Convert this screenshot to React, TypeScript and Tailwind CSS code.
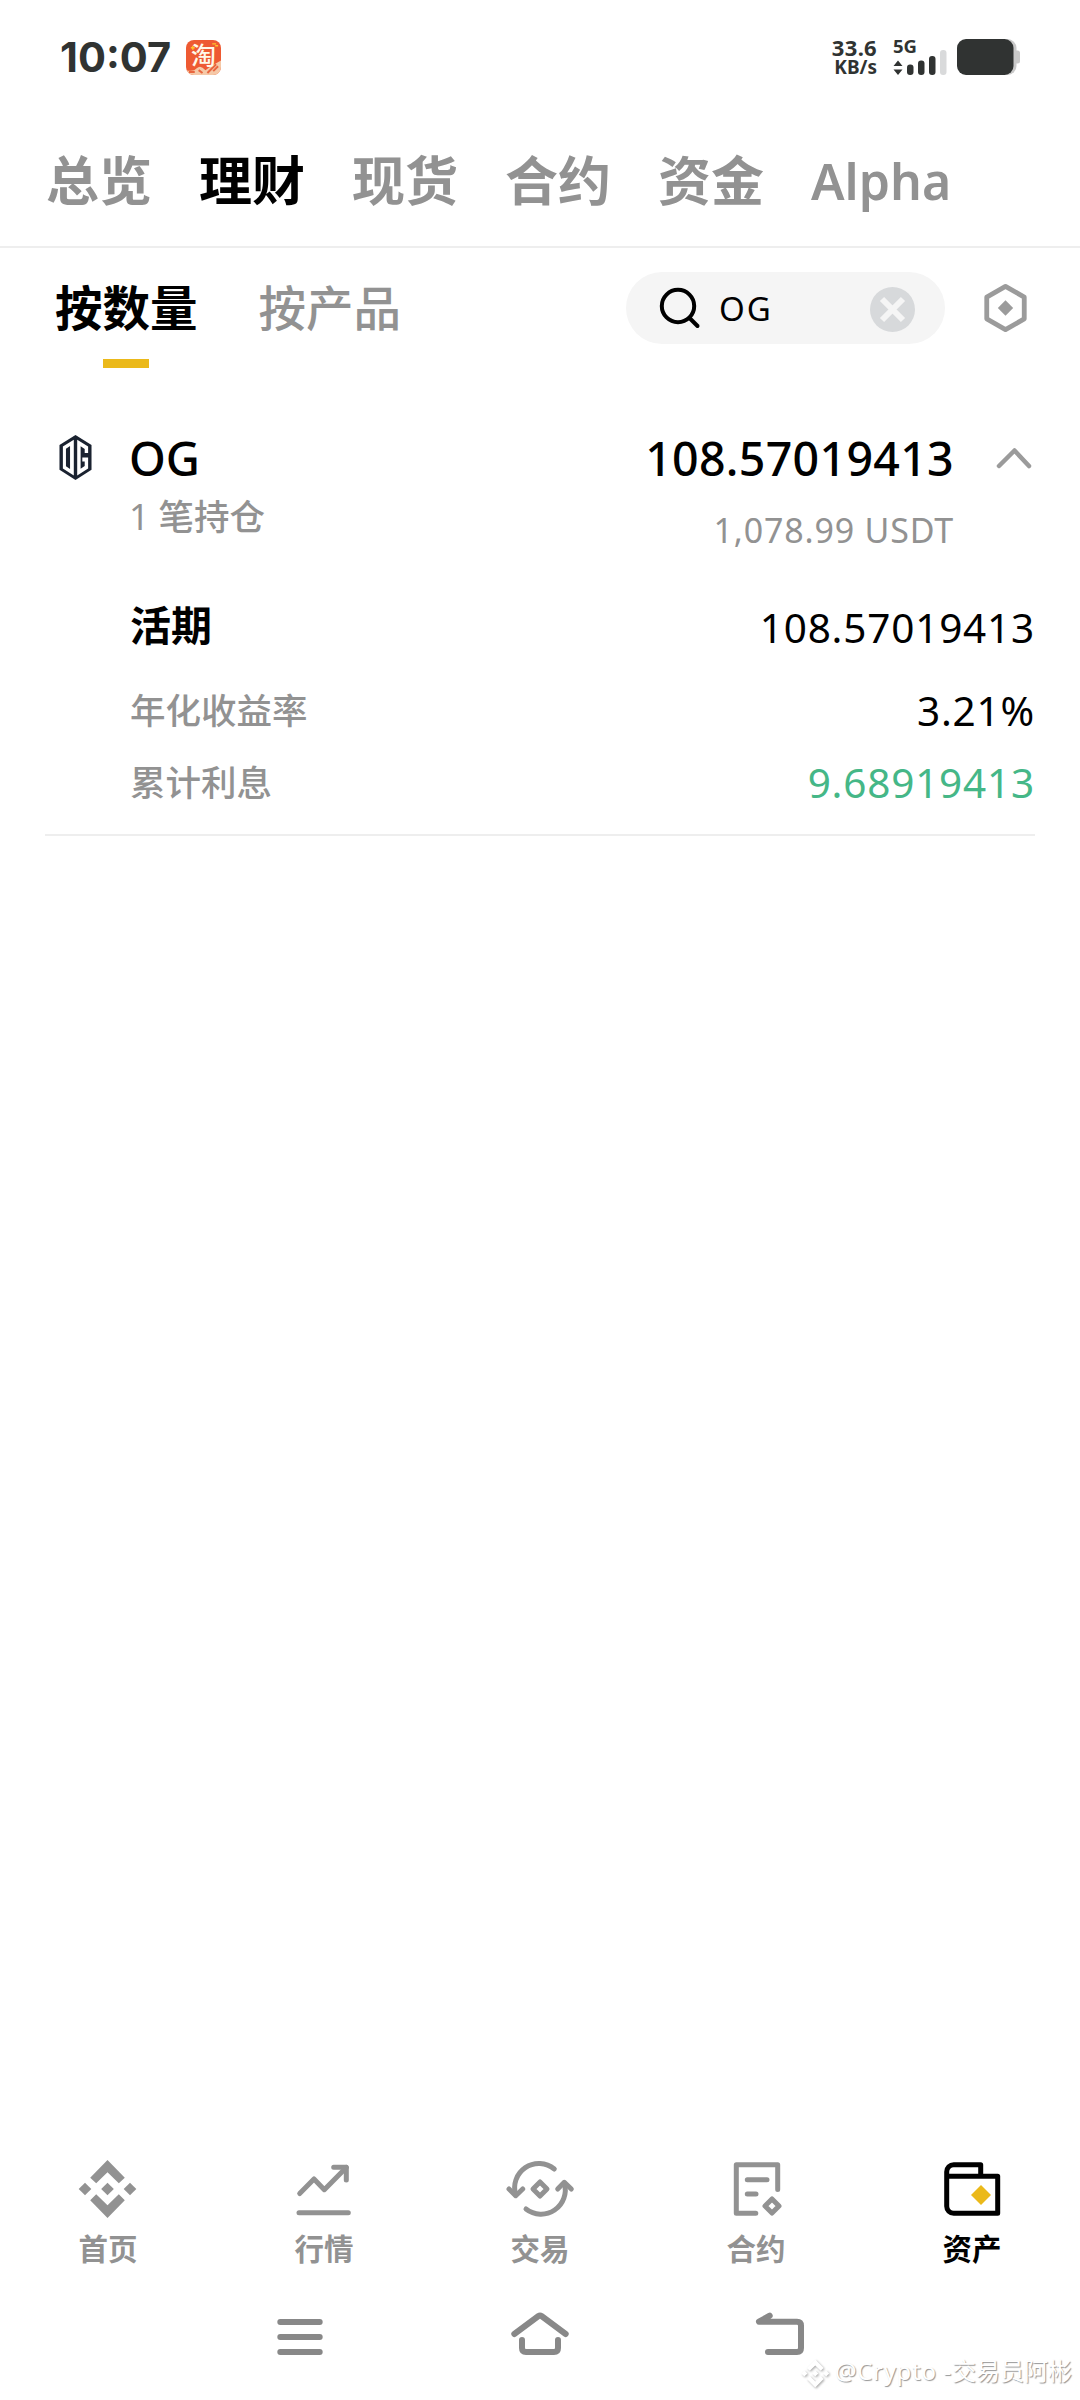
import type { ReactNode } from 'react';

type NavItem = {
  label: string;
  icon: ReactNode;
  active?: boolean;
};

const TABS = ['总览', '理财', '现货', '合约', '资金'];

const DETAILS = [
  { label: '年化收益率', value: '3.21%', tone: 'text-black' },
  { label: '累计利息', value: '9.68919413', tone: 'text-[#45b787]' },
];

function NavIcon({ children }: { children: ReactNode }) {
  return (
    <svg
      width="60"
      height="60"
      viewBox="0 0 60 60"
      fill="none"
      stroke="currentColor"
      strokeWidth="5"
      strokeLinecap="round"
      strokeLinejoin="round"
      className="overflow-visible"
    >
      {children}
    </svg>
  );
}

function BinanceMark() {
  return (
    <g fill="currentColor" stroke="none">
      <path d="M29.5 1 46.8 18.7 40.8 24.3 29.5 13.3 18.2 24.3 12.2 18.7Z" />
      <path d="M29.5 59 46.8 41.3 40.8 35.3 29.5 46.3 18.2 35.3 12.2 41.3Z" />
      <path d="M29.5 23.7 35.8 30 29.5 36.3 23.2 30Z" />
      <path d="M7 23.7 13.3 30 7 36.3.7 30Z" />
      <path d="M52 23.7 58.3 30 52 36.3 45.7 30Z" />
    </g>
  );
}

const NAV: NavItem[] = [
  { label: '首页', icon: <BinanceMark /> },
  {
    label: '行情',
    icon: (
      <>
        <path d="M5.7 34.5 20 20 30.3 30.7 52.3 8.5" />
        <path d="M39.7 8.3H52.3V21" />
        <path d="M5 53.7H54.3" />
      </>
    ),
  },
  {
    label: '交易',
    icon: (
      <>
        <path d="M44.3 10A24.3 24.3 0 0 0 5.7 36" />
        <path d="M-1 30 5.7 36.7 12.7 30" />
        <path d="M16 50A24.3 24.3 0 0 0 54.3 24" />
        <path d="M47.7 30 54.3 23.3 61.3 30" />
        <path d="M30 23 37 30 30 37 23 30Z" />
      </>
    ),
  },
  {
    label: '合约',
    icon: (
      <>
        <path d="M51.7 30.5V5.7H10.3V54.3H29.8" />
        <path d="M21.3 20.7H41M21.3 35H30" />
        <path d="M46 40 53 47 46 54 39 47Z" />
      </>
    ),
  },
  {
    label: '资产',
    active: true,
    icon: (
      <>
        <path d="M38.7 17V5.7H11.7A7 7 0 0 0 4.7 12.7V47.3A7 7 0 0 0 11.7 54.3H55.7V17.3H4.7" />
        <path d="M39 26 49 36 39 46 29 36Z" fill="#ebb91a" stroke="none" />
      </>
    ),
  },
];

function StatusBar() {
  return (
    <div className="flex h-[114px] items-center justify-between pr-[59px] pl-[60px] text-[#303332]">
      <div className="flex items-center">
        <span className="w-[126px] font-['Inter','Noto_Sans',sans-serif] text-[41.5px] leading-[42px] font-bold">10:07</span>
        <div className="relative flex h-[35px] w-[35px] justify-center rounded-lg bg-[#ee5a32]">
          <svg className="absolute inset-0 rounded-lg" width="35" height="35" viewBox="0 0 36 36">
            <path d="M0 31Q8 33 11 29Q15 25 20 31Q25 27 36 21V36H0Z" fill="#f5c9a8" />
            <path d="M3 33h6M13 31l4 3M22 34l9-9M28 32l5-5" stroke="#e9663f" strokeWidth="2" />
            <path d="M7 6v4M5 8h4M27 4h4M30 6h3" stroke="#ffc32b" strokeWidth="1.5" />
          </svg>
          <span className="relative font-['Noto_Sans_CJK_SC',sans-serif] text-[25px] leading-[29px] font-medium text-[#fff8e8]">淘</span>
        </div>
      </div>
      <div className="flex items-center">
        <div className="text-right font-bold">
          <div className="text-[22px] leading-[20px] tracking-[0.3px]">33.6</div>
          <div className="text-[19px] leading-[20px]">KB/s</div>
        </div>
        <div className="relative ml-4 h-9 w-14">
          <span className="absolute -top-[3px] left-0 text-[18.5px] leading-[20px] font-bold">5G</span>
          <svg width="56" height="36" viewBox="0 0 56 36" fill="currentColor">
            <path d="M5 21.500 9.500 27H.5ZM5 36 9.500 30.500H.5Z" />
            <rect x="14" y="25.500" width="6.500" height="10.500" rx="3" />
            <rect x="25" y="21.500" width="6.500" height="14.500" rx="3" />
            <rect x="36" y="17" width="6.500" height="19" rx="3" />
            <rect x="47" y="11" width="6.500" height="25" rx="3" fill="#d9dadb" />
          </svg>
        </div>
        <svg className="ml-2" width="64" height="36" viewBox="0 0 64 36">
          <rect x="30" y="0" width="29.500" height="36" rx="9" fill="#c9c9c9" />
          <rect x="56" y="11.500" width="7" height="13" rx="2.500" fill="#c9c9c9" />
          <rect x="0" y="0" width="56.500" height="36" rx="9" fill="#303332" />
        </svg>
      </div>
    </div>
  );
}

function Tabs() {
  return (
    <div className="flex h-[134px] items-center gap-[47px] border-b-2 border-[#eeeeee] pl-[46px] text-[53px] leading-[53px] font-bold text-[#929292]">
      {TABS.map((tab) => (
        <span key={tab} className={tab === '理财' ? 'text-black' : ''}>
          {tab}
        </span>
      ))}
      <span className="mt-0.5 font-['Noto_Sans',sans-serif] text-[50px] font-semibold">Alpha</span>
    </div>
  );
}

function Filters() {
  return (
    <div className="flex h-[120px] items-center pr-[52px] pl-[55px] text-[47.5px] leading-[48px] text-[#929292]">
      <div className="relative font-bold text-black">
        按数量
        <span className="absolute -bottom-[36px] left-[48px] h-[9px] w-[46px] bg-[#ebb91a]" />
      </div>
      <div className="ml-[61px] font-medium">按产品</div>
      <div className="ml-auto flex h-[72px] w-[319px] items-center rounded-full bg-[#f5f5f5] pr-[30px] pl-[33px]">
        <svg width="42" height="42" viewBox="0 0 42 42" fill="none" stroke="#000" strokeWidth="4" strokeLinecap="round">
          <circle cx="19" cy="19" r="16.200" />
          <path d="M30.500 31 38.500 39" />
        </svg>
        <span className="mt-px ml-[18px] text-[33px] leading-[33px] tracking-[2px] text-black">OG</span>
        <svg className="mt-0.5 ml-auto" width="45" height="45" viewBox="0 0 45 45">
          <circle cx="22.500" cy="22.500" r="22.500" fill="#d7d9db" />
          <path d="M12 12 33 33M33 12 12 33" stroke="#f5f5f5" strokeWidth="6" />
        </svg>
      </div>
      <svg className="ml-[38px]" width="45" height="50" viewBox="0 0 46 52">
        <path d="M23 3.500 42.500 14.700V37.300L23 48.500 3.500 37.300V14.700Z" fill="none" stroke="#9b9b9b" strokeWidth="5" strokeLinejoin="round" />
        <path d="M23 18 31 26 23 34 15 26Z" fill="#9b9b9b" />
      </svg>
    </div>
  );
}

function TokenLogo() {
  return (
    <svg width="33" height="45" viewBox="0 0 94 132">
      <path d="M47 0 94 29V102L47 132 0 102V29Z" fill="#1a2230" />
      <path d="M42 14V119L10 98V34ZM31 32 19 40V92L31 100Z" fill="#fff" />
      <path d="M52 14 84 34V53H74V41L62 33V99L74 91V78H67V66H84V98L52 119Z" fill="#fff" />
    </svg>
  );
}

function Holding() {
  return (
    <section className="mx-[45px] border-b-2 border-[#eeeeee] pt-[67px] pb-[31px] text-[#929292]">
      <div className="flex items-start">
        <div className="w-[84px] pl-[14px]">
          <TokenLogo />
        </div>
        <div>
          <div className="text-[47px] leading-[46px] font-medium text-black">OG</div>
          <div className="mt-[17px] text-[35.5px] leading-[36px]">
            1 <span className="font-medium">笔持仓</span>
          </div>
        </div>
        <div className="ml-auto text-right">
          <div className="text-[46.5px] leading-[46px] font-medium tracking-[0.3px] text-black">108.57019413</div>
          <div className="mt-[31px] text-[34px] leading-[36px] tracking-[0.8px]">1,078.99 USDT</div>
        </div>
        <svg className="mt-2.5 mr-[3px] ml-[42px]" width="36" height="26" viewBox="0 0 36 26" fill="none" stroke="#9b9b9b" strokeWidth="4.500" strokeLinecap="round" strokeLinejoin="round">
          <path d="M3 21 18.500 5.500 33 21" />
        </svg>
      </div>
      <div className="pl-[85px]">
        <div className="mt-[56px] flex justify-between leading-[42px] text-black">
          <span className="text-[41px] font-bold">活期</span>
          <span className="mt-[3px] text-[40.5px] tracking-[0.8px]">108.57019413</span>
        </div>
        {DETAILS.map((d) => (
          <div key={d.label} className="mt-10 flex items-center justify-between text-[35.5px] leading-[42px] last:mt-[30px]">
            <span className="font-medium">{d.label}</span>
            <span className={`mt-px text-[40.5px] leading-[41px] tracking-[0.8px] ${d.tone}`}>{d.value}</span>
          </div>
        ))}
      </div>
    </section>
  );
}

function BottomNav() {
  return (
    <nav className="mt-auto grid grid-cols-5">
      {NAV.map((item) => (
        <div key={item.label} className={`flex flex-col items-center gap-[14px] ${item.active ? 'text-black' : 'text-[#929292]'}`}>
          <NavIcon>{item.icon}</NavIcon>
          <span className="text-[29.5px] leading-[31px] font-bold">{item.label}</span>
        </div>
      ))}
    </nav>
  );
}

function SystemKeys() {
  const keys = [
    'M10.300 12H49.700M10.300 27H49.700M10.300 42H49.700',
    'M4.300 24 28.500 6Q30 5 31.500 6L55.700 24M12 30V38Q12 42 16 42H44Q48 42 48 38V30',
    'M19.700 5.700 9 11.700H47Q51 11.700 51 15.700V38Q51 42 47 42H18',
  ];
  return (
    <div className="mt-[46px] mb-[40px] grid grid-cols-3 justify-items-center px-[180px]">
      {keys.map((d) => (
        <svg key={d} width="60" height="50" viewBox="0 0 60 50" fill="none" stroke="#888888" strokeWidth="6" strokeLinecap="round" strokeLinejoin="round">
          <path d={d} />
        </svg>
      ))}
    </div>
  );
}

function Watermark() {
  return (
    <div className="absolute right-[8px] bottom-[11px] flex items-center gap-[5px] text-white">
      <svg width="29" height="29" viewBox="0 0 60 60" className="overflow-visible drop-shadow-[1px_1px_1px_rgba(0,0,0,0.35)]">
        <BinanceMark />
      </svg>
      <span className="pb-1 text-[24px] leading-[28px] whitespace-nowrap [text-shadow:1px_1px_1px_rgba(0,0,0,0.42)]">
        <span className="tracking-[0.7px]">@Crypto -</span>交易员阿彬
      </span>
    </div>
  );
}

export default function App() {
  return (
    <div lang="zh-CN" className="relative flex h-[2400px] w-[1080px] flex-col overflow-hidden bg-white font-['Noto_Sans','Noto_Sans_CJK_SC',sans-serif]">
      <StatusBar />
      <Tabs />
      <Filters />
      <Holding />
      <BottomNav />
      <SystemKeys />
      <Watermark />
    </div>
  );
}
